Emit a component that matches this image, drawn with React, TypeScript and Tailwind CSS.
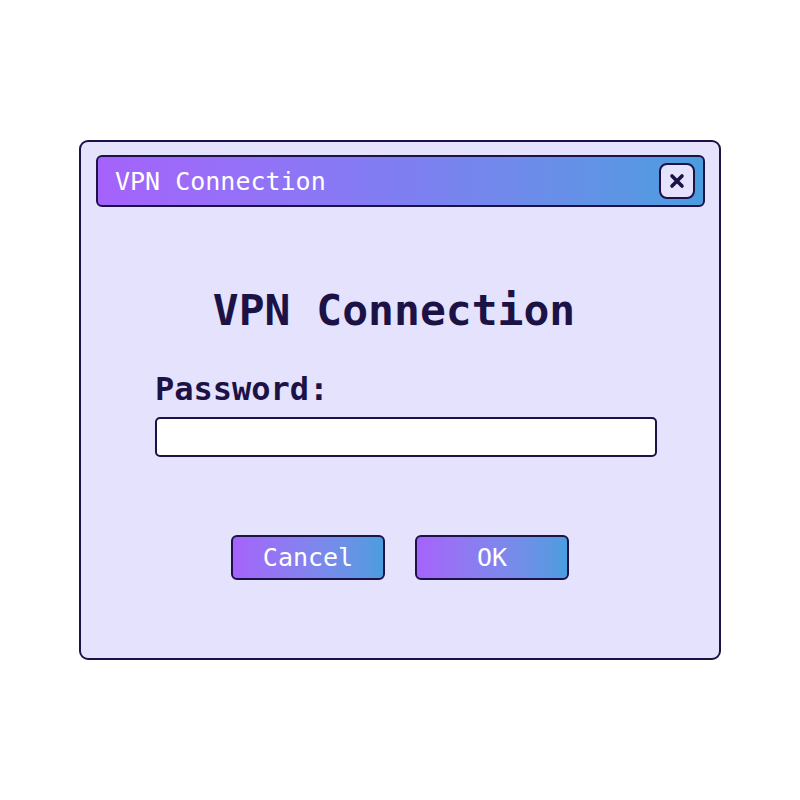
export default function App() {
  const mono = { fontFamily: '"DejaVu Sans Mono", "Liberation Mono", monospace' };
  return (
    <div className="w-[800px] h-[800px] bg-white relative" style={mono}>
      <div className="absolute left-[79px] top-[140px] w-[642px] h-[520px] rounded-[9px] border-2 border-[#1c1245] bg-[#e4e2fc] flex flex-col">
        <div className="mt-[13px] ml-[15px] mr-[14px] h-[52px] rounded-[6px] border-2 border-[#1c1245] bg-gradient-to-r from-[#a562fb] via-[#7f7ef2] to-[#4a9ddf] flex items-center justify-between pl-[17px] pr-[8px]">
          <span className="text-white text-[25px] leading-none">VPN Connection</span>
          <div className="w-[36px] h-[36px] rounded-[8px] border-2 border-[#1c1245] bg-[#e4e2fc] flex items-center justify-center">
            <svg width="18" height="18" viewBox="0 0 18 18">
              <path d="M4 4 L14 14 M14 4 L4 14" stroke="#1c1245" strokeWidth="3.6" strokeLinecap="round" />
            </svg>
          </div>
        </div>
        <div className="mt-[82px] text-center text-[#1c1245] text-[43px] font-bold leading-none pr-[12px]">VPN Connection</div>
        <div className="mt-[41px] ml-[74px] text-[#1c1245] text-[32px] font-bold leading-none">Password:</div>
        <div className="mt-[12px] ml-[74px] w-[502px] h-[40px] rounded-[5px] border-2 border-[#1c1245] bg-white"></div>
        <div className="mt-[78px] flex justify-center gap-[30px]">
          <div className="w-[154px] h-[45px] rounded-[6px] border-2 border-[#1c1245] bg-gradient-to-r from-[#a562fb] to-[#4a9ddf] flex items-center justify-center text-white text-[25px] leading-none">Cancel</div>
          <div className="w-[154px] h-[45px] rounded-[6px] border-2 border-[#1c1245] bg-gradient-to-r from-[#a562fb] to-[#4a9ddf] flex items-center justify-center text-white text-[25px] leading-none">OK</div>
        </div>
      </div>
    </div>
  );
}
